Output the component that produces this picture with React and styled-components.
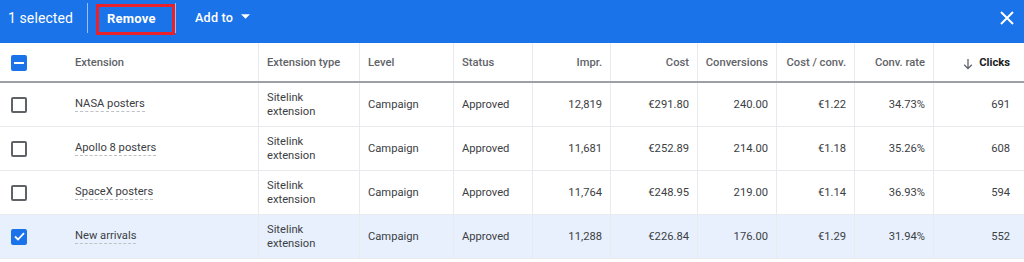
import React from "react";
import styled, { createGlobalStyle } from "styled-components";

const GlobalStyle = createGlobalStyle`
  html, body {
    margin: 0;
    padding: 0;
    background: #fff;
    font-family: Roboto, "Liberation Sans", Arial, sans-serif;
  }
`;

const columns = [
  { key: "name", label: "Extension", width: 259, align: "left" },
  { key: "type", label: "Extension type", width: 101, align: "left" },
  { key: "level", label: "Level", width: 94, align: "left" },
  { key: "status", label: "Status", width: 79, align: "left" },
  { key: "impr", label: "Impr.", width: 78, align: "right" },
  { key: "cost", label: "Cost", width: 87, align: "right" },
  { key: "conv", label: "Conversions", width: 79, align: "right" },
  { key: "cpc", label: "Cost / conv.", width: 78, align: "right" },
  { key: "rate", label: "Conv. rate", width: 79, align: "right" },
  { key: "clicks", label: "Clicks", width: 90, align: "right", sorted: true },
];

const rows = [
  { name: "NASA posters", impr: "12,819", cost: "€291.80", conv: "240.00", cpc: "€1.22", rate: "34.73%", clicks: "691" },
  { name: "Apollo 8 posters", impr: "11,681", cost: "€252.89", conv: "214.00", cpc: "€1.18", rate: "35.26%", clicks: "608" },
  { name: "SpaceX posters", impr: "11,764", cost: "€248.95", conv: "219.00", cpc: "€1.14", rate: "36.93%", clicks: "594" },
  { name: "New arrivals", impr: "11,288", cost: "€226.84", conv: "176.00", cpc: "€1.29", rate: "31.94%", clicks: "552", selected: true },
].map((r) => ({ ...r, type: "Sitelink extension", level: "Campaign", status: "Approved" }));

const gridTemplate = columns.map((c) => `${c.width}px`).join(" ");

export default function App() {
  return (
    <>
      <GlobalStyle />
      <Page>
        <ActionBar>
          <SelectedCount>1 selected</SelectedCount>
          <Divider />
          <HighlightBox>
            <BarButton $bold>Remove</BarButton>
          </HighlightBox>
          <Divider />
          <BarButton>
            Add to
            <Caret viewBox="0 0 10 5">
              <path d="M0 0 L10 0 L5 5 Z" fill="#fff" />
            </Caret>
          </BarButton>
          <CloseButton aria-label="close">
            <svg width="14" height="14" viewBox="0 0 14 14">
              <path d="M1 1 L13 13 M13 1 L1 13" stroke="#fff" strokeWidth="2" />
            </svg>
          </CloseButton>
        </ActionBar>

        <Table>
          <HeaderRow>
            {columns.map((c, i) => (
              <HeaderCell key={c.key} $align={c.align} $last={i === columns.length - 1} $sorted={c.sorted}>
                {i === 0 && (
                  <Checkbox $checked>
                    <svg width="10" height="2" viewBox="0 0 10 2">
                      <rect width="10" height="2" fill="#fff" />
                    </svg>
                  </Checkbox>
                )}
                {c.sorted && (
                  <SortArrow viewBox="0 0 12 12">
                    <path d="M6 1 V10.5 M2.2 6.8 L6 10.6 L9.8 6.8" stroke="#5f6368" strokeWidth="1.3" fill="none" />
                  </SortArrow>
                )}
                {c.label}
              </HeaderCell>
            ))}
          </HeaderRow>
          {rows.map((r) => (
            <BodyRow key={r.name} $selected={r.selected}>
              {columns.map((c, i) => (
                <Cell key={c.key} $align={c.align} $last={i === columns.length - 1}>
                  {i === 0 && (
                    <Checkbox $checked={r.selected}>
                      {r.selected && (
                        <svg width="11" height="9" viewBox="0 0 11 9">
                          <path d="M1 4.5 L4 7.5 L10 1.2" stroke="#fff" strokeWidth="1.8" fill="none" />
                        </svg>
                      )}
                    </Checkbox>
                  )}
                  {i === 0 ? <NameLink>{r[c.key]}</NameLink> : c.key === "type" ? <Wrap>{r[c.key]}</Wrap> : r[c.key]}
                </Cell>
              ))}
            </BodyRow>
          ))}
        </Table>
      </Page>
    </>
  );
}

const Page = styled.div`
  width: 1024px;
  height: 262px;
  overflow: hidden;
  background: #fff;
`;

const ActionBar = styled.div`
  height: 43px;
  box-sizing: border-box;
  background: #1a73e8;
  display: flex;
  align-items: center;
  padding: 0 0 9px 8px;
  color: #fff;
`;

const SelectedCount = styled.span`
  font-size: 14px;
  letter-spacing: 0.1px;
  margin-right: 14px;
  margin-top: 1px;
`;

const Divider = styled.div`
  width: 1px;
  height: 30px;
  margin-top: 2px;
  background: rgba(255, 255, 255, 0.55);
`;

const HighlightBox = styled.div`
  margin-left: 8px;
  box-sizing: border-box;
  width: 79px;
  height: 31px;
  margin-top: 5px;
  border: 3px solid #e8212b;
  display: flex;
  align-items: center;
  padding: 0 0 4px 8px;
`;

const BarButton = styled.div`
  display: flex;
  align-items: center;
  font-size: ${(p) => (p.$bold ? "13px" : "12.6px")};
  font-weight: ${(p) => (p.$bold ? 700 : 500)};
  letter-spacing: 0.2px;
  color: #fff;
  margin-left: ${(p) => (p.$bold ? "0" : "19px")};
  margin-top: 1px;
`;

const Caret = styled.svg`
  width: 9px;
  height: 5px;
  margin-left: 8px;
  margin-bottom: 2px;
`;

const CloseButton = styled.div`
  margin-left: auto;
  margin-right: 10px;
  margin-top: 1px;
  display: flex;
`;

const Table = styled.div`
  width: 1024px;
`;

const HeaderRow = styled.div`
  display: grid;
  grid-template-columns: ${gridTemplate};
  height: 40px;
  box-sizing: border-box;
  border-bottom: 2px solid #9aa0a6;
  box-shadow: 0 1px 0 #e0e2e5;
`;

const BodyRow = styled.div`
  display: grid;
  grid-template-columns: ${gridTemplate};
  height: 44px;
  box-sizing: border-box;
  border-bottom: 1px solid #e8eaed;
  background: ${(p) => (p.$selected ? "#e8f0fe" : "#fff")};
`;

const BaseCell = styled.div`
  display: flex;
  align-items: center;
  justify-content: ${(p) => (p.$align === "right" ? "flex-end" : "flex-start")};
  box-sizing: border-box;
  padding: ${(p) => (p.$last ? "0 14px 0 8px" : "0 8px")};
  border-right: ${(p) => (p.$last ? "none" : "1px solid #e8eaed")};
  font-size: 11.2px;
  white-space: nowrap;
`;

const HeaderCell = styled(BaseCell)`
  font-weight: ${(p) => (p.$sorted ? 700 : 500)};
  color: ${(p) => (p.$sorted ? "#202124" : "#5f6368")};
  padding-top: 1px;
`;

const Cell = styled(BaseCell)`
  color: #3c4043;
`;

const Checkbox = styled.div`
  width: 16px;
  height: 16px;
  box-sizing: border-box;
  margin: 0 48px 0 3px;
  border-radius: 2px;
  border: 2px solid ${(p) => (p.$checked ? "#1a73e8" : "#5f6368")};
  background: ${(p) => (p.$checked ? "#1a73e8" : "transparent")};
  display: flex;
  align-items: center;
  justify-content: center;
  flex-shrink: 0;
`;

const NameLink = styled.span`
  border-bottom: 1px dashed #bdc1c6;
  padding-bottom: 1px;
`;

const Wrap = styled.span`
  white-space: normal;
  line-height: 14px;
`;

const SortArrow = styled.svg`
  width: 12px;
  height: 12px;
  margin-right: 5px;
  margin-top: 2px;
`;
